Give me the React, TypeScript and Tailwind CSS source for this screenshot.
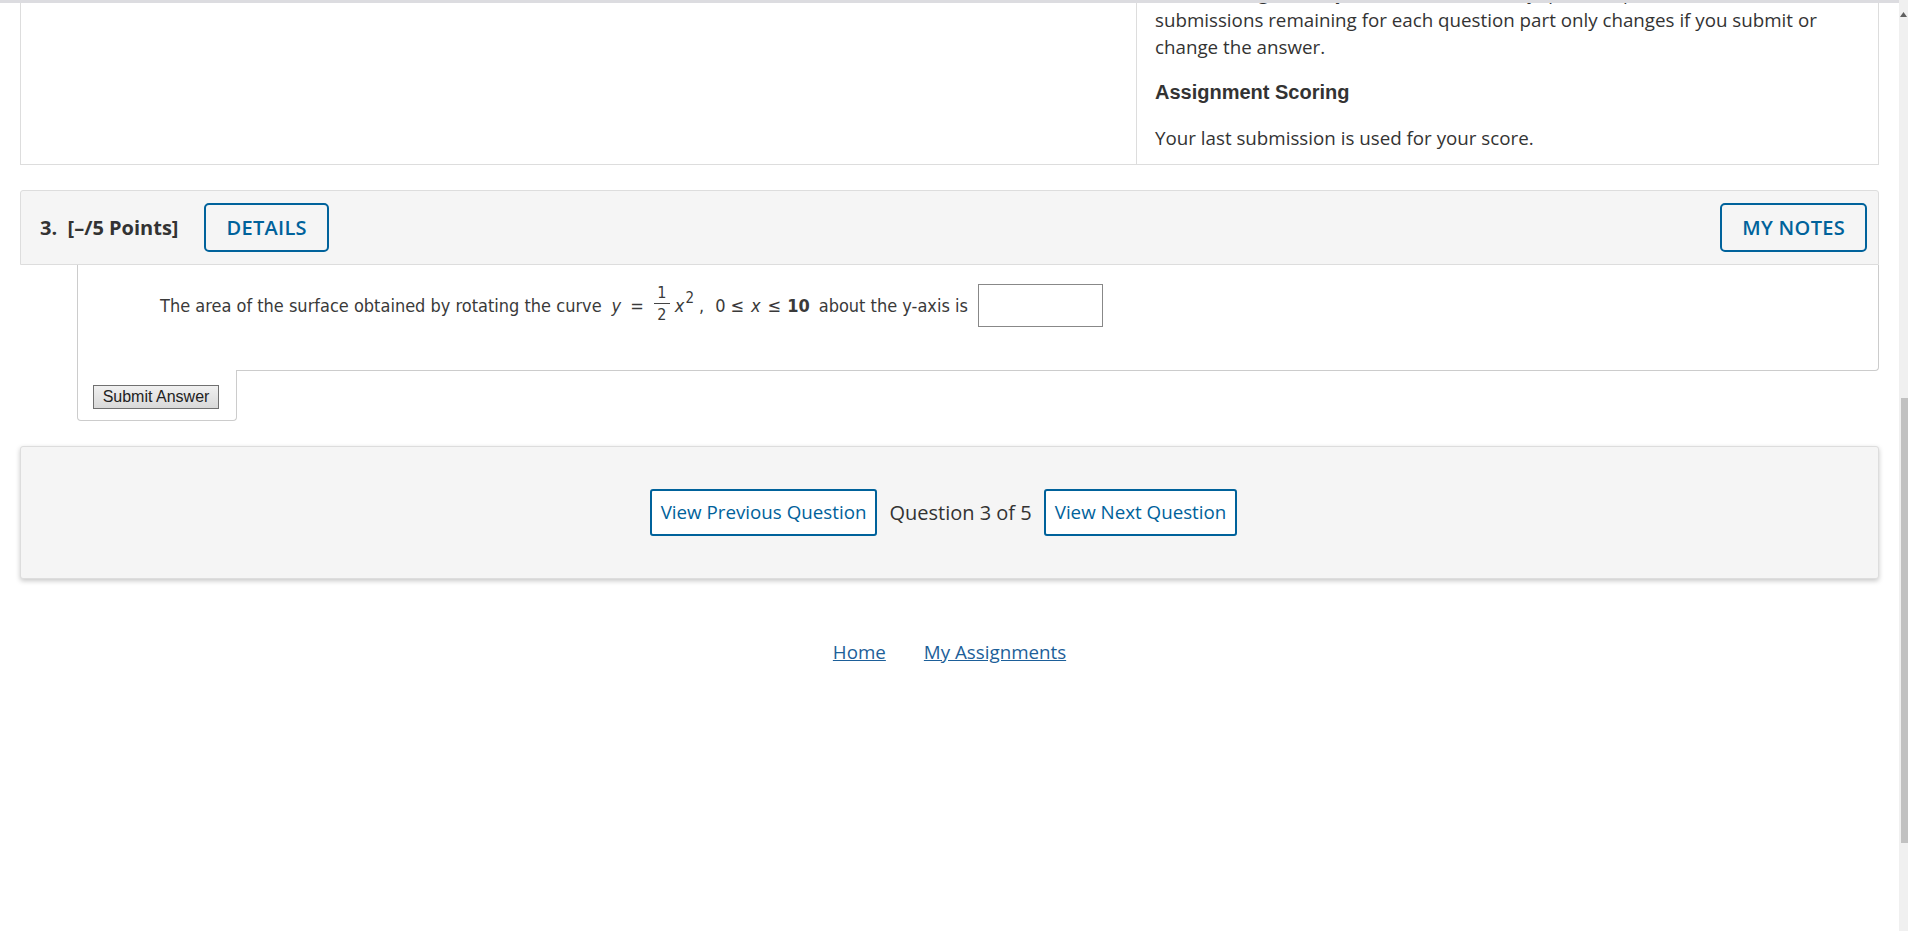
import React from "react"

const blueBtn =
  "h-[49px] border-2 border-[#00629b] rounded-[5px] bg-transparent px-[20px] text-[20px] font-semibold text-[#00629b] font-['Open_Sans',sans-serif] tracking-[0.3px]"

const navBtn =
  "h-[47px] border-2 border-[#00629b] rounded-[3px] bg-white px-[9px] text-[18.75px] text-[#00629b] font-['Open_Sans',sans-serif]"

function Fraction() {
  return (
    <span className="inline-flex flex-col items-center ml-[10px] mr-[5px] relative top-[-2px] text-[16px] leading-[13px]">
      <span>1</span>
      <span className="w-[16px] h-px bg-[#444] my-[4px]" />
      <span>2</span>
    </span>
  )
}

export default function App() {
  return (
    <div className="flex h-[931px] w-full overflow-hidden bg-white text-[#333]">
      <div className="flex-1 min-w-0">
        <div className="h-[3px] bg-[#dcdce0]" />

        {/* instructions panel, scrolled mostly out of view */}
        <div className="mx-[20px] h-[162px] flex border-x border-b border-[#ddd] overflow-hidden">
          <div className="w-[1115px]" />
          <div className="flex-1 border-l border-[#ddd] pl-[18px] pr-[18px] font-['Open_Sans',sans-serif]">
            <p className="-mt-[24px] text-[18.75px] leading-[27px]">
              For this assignment, you submit answers by question parts. The number of
              <br />
              submissions remaining for each question part only changes if you submit or
              <br />
              change the answer.
            </p>
            <h3 className="mt-[21px] text-[20px] leading-[23px] font-bold font-['Liberation_Sans',Arial,sans-serif]">
              Assignment Scoring
            </h3>
            <p className="mt-[20px] text-[18.75px] leading-[27px]">Your last submission is used for your score.</p>
          </div>
        </div>

        {/* question header */}
        <div className="mt-[25px] mx-[20px] h-[75px] flex items-center justify-between border border-[#ddd] bg-[#f5f5f5] rounded-t-[3px] pl-[19px] pr-[11px]">
          <div className="flex items-center">
            <span className="text-[20px] font-bold font-['Open_Sans',sans-serif] whitespace-pre">3.  [–/5 Points]</span>
            <button className={blueBtn + " ml-[26px]"}>DETAILS</button>
          </div>
          <button className={blueBtn}>MY NOTES</button>
        </div>

        {/* question body */}
        <div className="ml-[77px] mr-[20px] h-[106px] border-x border-b border-[#ccc] rounded-br-[4px] pt-[19px] pl-[82px]">
          <div className="flex items-center text-[18px] font-['DejaVu_Sans_Condensed','Liberation_Sans',sans-serif] text-[#3a3a3a]">
            <span>The area of the surface obtained by rotating the curve</span>
            <span className="ml-[10px] italic">y</span>
            <span className="ml-[9px]">=</span>
            <Fraction />
            <span className="italic">x</span>
            <span className="text-[15px] relative top-[-7px] ml-[1px]">2</span>
            <span className="ml-[5px]">,</span>
            <span className="ml-[11px]">0</span>
            <span className="ml-[5px]">≤</span>
            <span className="ml-[7px] italic">x</span>
            <span className="ml-[7px]">≤</span>
            <span className="ml-[6px] font-bold">10</span>
            <span className="ml-[9px]">about the y-axis is</span>
            <input className="ml-[10px] w-[125px] h-[43px] border border-[#888] bg-white outline-none" />
          </div>
        </div>
        <div className="relative -mt-px ml-[77px] w-[160px] h-[51px] bg-white border-x border-b border-[#ccc] rounded-b-[4px] pl-[15px] pt-[14px]">
          <button className="w-[126px] h-[24px] border border-[#707070] bg-gradient-to-b from-[#f0f0f0] to-[#d9d9d9] text-[16px] leading-[20px] text-[#222] font-['Liberation_Sans',Arial,sans-serif]">
            Submit Answer
          </button>
        </div>

        {/* navigation */}
        <div className="mt-[25px] mx-[20px] h-[133px] flex items-center justify-center gap-[12px] pr-[12px] border border-[#ddd] bg-[#f5f5f5] rounded-[3px] shadow-[0_2px_5px_rgba(0,0,0,0.22)] font-['Open_Sans',sans-serif]">
          <button className={navBtn}>View Previous Question</button>
          <span className="text-[20px]">Question 3 of 5</span>
          <button className={navBtn}>View Next Question</button>
        </div>

        <div className="mt-[59px] flex justify-center gap-[38px] text-[18.75px] leading-[27px] font-['Open_Sans',sans-serif]">
          <a href="#" className="text-[#1d5f99] underline">Home</a>
          <a href="#" className="text-[#1d5f99] underline">My Assignments</a>
        </div>
      </div>

      {/* scrollbar */}
      <div className="w-[9px] h-[931px] bg-[#f0f0f0] flex flex-col items-end">
        <svg width="7" height="5" viewBox="0 0 7 5" className="mt-[12px] mr-[1px]">
          <path d="M0 5 L3.5 0 L7 5 Z" fill="#606060" />
        </svg>
        <div className="mt-[381px] w-[7px] h-[445px] bg-[#c1c1c1]" />
      </div>
    </div>
  )
}
